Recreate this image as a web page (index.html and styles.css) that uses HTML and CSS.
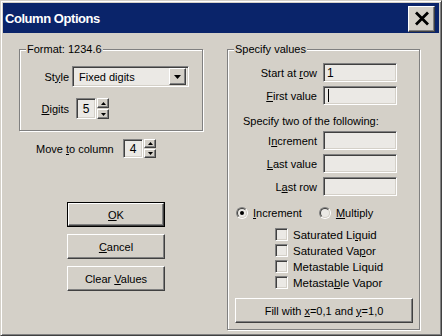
FILE: index.html
```html
<!DOCTYPE html>
<html>
<head>
<meta charset="utf-8">
<link rel="stylesheet" href="styles.css">
</head>
<body>
<div class="window">
  <div class="titlebar">
    <span class="title">Column Options</span>
    <button class="close raised" aria-label="Close">
      <svg width="16" height="15" viewBox="0 0 16 15"><path d="M2 1.5 L14 13.5 M14 1.5 L2 13.5" stroke="#000" stroke-width="2.8" fill="none"/></svg>
    </button>
  </div>
  <div class="body">
    <div class="left">
      <div class="group format">
        <div class="legend">Format: 1234.6</div>
        <div class="row style-row">
          <span class="lbl">St<u>y</u>le</span>
          <div class="combo sunken">
            <span class="combo-text">Fixed digits</span>
            <span class="dd-btn raised"><svg width="7" height="4" viewBox="0 0 7 4"><path d="M0 0H7L3.5 4Z" fill="#000"/></svg></span>
          </div>
        </div>
        <div class="row digits-row">
          <span class="lbl"><u>D</u>igits</span>
          <div class="edit sunken num">5</div>
          <div class="spin">
            <span class="spin-btn raised"><svg width="5" height="3" viewBox="0 0 5 3"><path d="M0 3H5L2.5 0Z" fill="#000"/></svg></span>
            <span class="spin-btn raised"><svg width="5" height="3" viewBox="0 0 5 3"><path d="M0 0H5L2.5 3Z" fill="#000"/></svg></span>
          </div>
        </div>
      </div>
      <div class="row move-row">
        <span class="move-lbl">Move <u>t</u>o column</span>
        <div class="edit sunken num">4</div>
        <div class="spin">
          <span class="spin-btn raised"><svg width="5" height="3" viewBox="0 0 5 3"><path d="M0 3H5L2.5 0Z" fill="#000"/></svg></span>
          <span class="spin-btn raised"><svg width="5" height="3" viewBox="0 0 5 3"><path d="M0 0H5L2.5 3Z" fill="#000"/></svg></span>
        </div>
      </div>
      <div class="buttons">
        <button class="btn default"><span class="btn-in raised"><u>O</u>K</span></button>
        <button class="btn raised"><u>C</u>ancel</button>
        <button class="btn raised">Clear <u>V</u>alues</button>
      </div>
    </div>
    <div class="group values">
      <div class="legend">Specify values</div>
      <div class="frow first-row">
        <span class="flbl">Start at <u>r</u>ow</span>
        <div class="edit sunken field">1</div>
      </div>
      <div class="frow">
        <span class="flbl"><u>F</u>irst value</span>
        <div class="edit sunken field"><span class="caret"></span></div>
      </div>
      <div class="note">Specify two of the following:</div>
      <div class="frow tight">
        <span class="flbl">I<u>n</u>crement</span>
        <div class="edit sunken field"></div>
      </div>
      <div class="frow">
        <span class="flbl"><u>L</u>ast value</span>
        <div class="edit sunken field"></div>
      </div>
      <div class="frow">
        <span class="flbl">L<u>a</u>st row</span>
        <div class="edit sunken field"></div>
      </div>
      <div class="radios">
        <span class="radio-item"><span class="radio checked"></span><span><u>I</u>ncrement</span></span>
        <span class="radio-item multiply"><span class="radio"></span><span><u>M</u>ultiply</span></span>
      </div>
      <div class="checks">
        <div class="check-item"><span class="check"></span><span>Saturated Li<u>q</u>uid</span></div>
        <div class="check-item"><span class="check"></span><span>Saturated Va<u>p</u>or</span></div>
        <div class="check-item"><span class="check"></span><span>Metastable Liquid</span></div>
        <div class="check-item"><span class="check"></span><span>Metasta<u>b</u>le Vapor</span></div>
      </div>
      <button class="btn raised fill">Fill with <u>x</u>=0,1 and <u>y</u>=1,0</button>
    </div>
  </div>
</div>
</body>
</html>
```
FILE: styles.css
```css
* { box-sizing: border-box; }
html, body { margin: 0; padding: 0; background: #d4d0c8; }
body {
  font-family: "Liberation Sans", Arial, sans-serif;
  font-size: 11px;
  color: #000;
}
u { text-decoration: underline; text-underline-offset: 1px; }

.window {
  width: 442px;
  height: 336px;
  background: #d4d0c8;
  border: 1px solid;
  border-color: #d4d0c8 #404040 #404040 #d4d0c8;
  box-shadow: inset 1px 1px 0 #fff, inset -1px -1px 0 #808080;
  padding: 2px;
  display: flex;
  flex-direction: column;
}

.titlebar {
  height: 30px;
  background: #0a246a;
  display: flex;
  align-items: center;
  padding: 0 4px 0 2px;
}
.title {
  color: #fff;
  font-weight: bold;
  font-size: 13px;
  letter-spacing: -0.45px;
  flex: 1;
}

.raised {
  background: #d4d0c8;
  border: 1px solid;
  border-color: #fff #404040 #404040 #fff;
  box-shadow: inset -1px -1px 0 #808080, inset 1px 1px 0 #d4d0c8;
}
.sunken {
  border: 1px solid;
  border-color: #808080 #fff #fff #808080;
  box-shadow: inset 1px 1px 0 #404040, inset -1px -1px 0 #d4d0c8;
  background: #ebe9e5;
}

.close {
  width: 27px;
  height: 26px;
  margin-top: 1px;
  padding: 0;
  display: flex;
  align-items: center;
  justify-content: center;
}
.close svg { display: block; margin-left: 1px; }

.body {
  display: flex;
  padding: 16px 0 0 16px;
  gap: 24px;
}

.left {
  width: 184px;
  display: flex;
  flex-direction: column;
}

.group {
  border: 1px solid #808080;
  box-shadow: inset 1px 1px 0 #fff, 1px 1px 0 #fff;
}
.legend {
  width: fit-content;
  margin: -7px 0 0 6px;
  padding: 0 1px;
  line-height: 13px;
  height: 13px;
  background: #d4d0c8;
}

.format {
  height: 82px;
}
.row {
  display: flex;
  align-items: center;
}
.lbl {
  width: 49px;
  text-align: right;
}
.style-row {
  margin-top: 10px;
  height: 21px;
}
.combo {
  margin-left: 3px;
  width: 117px;
  height: 21px;
  display: flex;
  align-items: center;
  padding: 2px 2px 2px 6px;
}
.combo-text { flex: 1; }
.dd-btn {
  width: 17px;
  height: 17px;
  display: flex;
  align-items: center;
  justify-content: center;
}
.dd-btn svg { display: block; }

.digits-row {
  margin-top: 11px;
  height: 21px;
}
.digits-row .edit {
  margin-left: 7px;
  width: 20px;
  height: 21px;
}
.num {
  display: flex;
  align-items: center;
  justify-content: center;
  font-size: 12px;
}
.spin {
  display: flex;
  flex-direction: column;
  width: 12px;
  margin-left: 1px;
}
.spin-btn {
  height: 10px;
  display: flex;
  align-items: center;
  justify-content: center;
}
.spin-btn + .spin-btn { margin-top: 1px; }
.spin-btn svg { display: block; }
.digits-row .spin { height: 21px; }

.move-row {
  margin-top: 8px;
  height: 19px;
}
.move-lbl {
  margin-left: 17px;
  width: 87px;
}
.move-row .edit {
  width: 20px;
  height: 19px;
}
.move-row .spin-btn { height: 9px; }

.buttons {
  display: flex;
  flex-direction: column;
  gap: 7px;
  margin: 44px 0 0 48px;
}
.btn {
  font-family: inherit;
  font-size: 11px;
  color: #000;
  padding: 0;
  width: 98px;
  height: 25px;
  cursor: default;
}
.btn.default {
  border: 1px solid #000;
  background: #d4d0c8;
  display: flex;
}
.btn-in {
  flex: 1;
  display: flex;
  align-items: center;
  justify-content: center;
}

.values {
  width: 193px;
  height: 281px;
  display: flex;
  flex-direction: column;
}
.frow {
  display: flex;
  align-items: center;
  height: 19px;
  margin-top: 4px;
}
.frow.first-row { margin-top: 7px; }
.frow.tight { margin-top: 3px; }
.flbl {
  width: 89px;
  text-align: right;
  margin-right: 6px;
}
.field {
  width: 74px;
  height: 19px;
  padding-left: 3px;
  display: flex;
  align-items: center;
  font-size: 12px;
}
.caret {
  display: block;
  width: 1px;
  height: 13px;
  background: #000;
  margin-left: 1px;
}
.note {
  margin: 10px 0 0 15px;
  line-height: 13px;
}

.radios {
  display: flex;
  margin: 10px 0 0 8px;
  height: 13px;
  align-items: center;
}
.radio-item {
  display: flex;
  align-items: center;
  gap: 5px;
}
.radio-item.multiply { margin-left: 17px; }
.radio {
  width: 12px;
  height: 12px;
  border-radius: 50%;
  border: 1px solid;
  border-color: #808080 #fff #fff #808080;
  position: relative;
  background: #d4d0c8;
}
.radio::before {
  content: "";
  position: absolute;
  inset: 0;
  border-radius: 50%;
  border: 1px solid;
  border-color: #404040 #d4d0c8 #d4d0c8 #404040;
  background: #ebe9e5;
}
.radio.checked::after {
  content: "";
  position: absolute;
  left: 3px;
  top: 3px;
  width: 4px;
  height: 4px;
  border-radius: 50%;
  background: #000;
}

.checks {
  margin: 9px 0 0 47px;
  display: flex;
  flex-direction: column;
  gap: 3px;
}
.check-item {
  display: flex;
  align-items: center;
  gap: 5px;
  height: 13px;
}
.check {
  width: 13px;
  height: 13px;
  border: 1px solid;
  border-color: #808080 #fff #fff #808080;
  box-shadow: inset 1px 1px 0 #404040, inset -1px -1px 0 #d4d0c8;
  background: #ebe9e5;
}
.check-item span:last-child { font-size: 11.5px; }

.fill {
  margin: 9px 0 0 7px;
  width: 178px;
  height: 25px;
}
```
